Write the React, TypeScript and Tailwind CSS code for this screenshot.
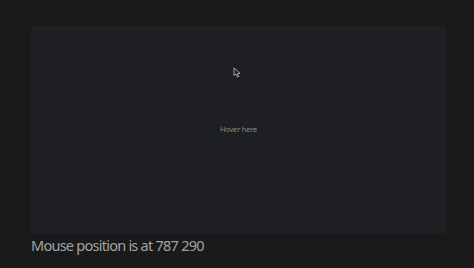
export default function App() {
  return (
    <div className="h-[268px] w-[474px] overflow-hidden bg-[#1a1a1a] pl-[31px] pt-[26px] font-['Noto_Sans',sans-serif]">
      <div className="relative flex h-[208px] w-[415px] items-center justify-center bg-[#1e1f23]">
        <span className="text-[7.5px] tracking-[-0.2px] text-[#8a8a8e]">Hover here</span>
        <svg
          className="absolute left-[202px] top-[41px]"
          width="8"
          height="11"
          viewBox="0 0 8 11"
          fill="none"
        >
          <path
            d="M1 1 L1 8.5 L3 7 L4.5 10 L5.8 9.4 L4.4 6.5 L7 6.3 Z"
            fill="#1e1f23"
            stroke="#b0b0b4"
            strokeWidth="0.9"
            strokeLinejoin="round"
          />
        </svg>
      </div>
      <p className="mt-[1px] text-[14.5px] leading-[20px] tracking-[-0.75px] text-[#a3a3a6]">
        Mouse position is at 787 290
      </p>
    </div>
  );
}
